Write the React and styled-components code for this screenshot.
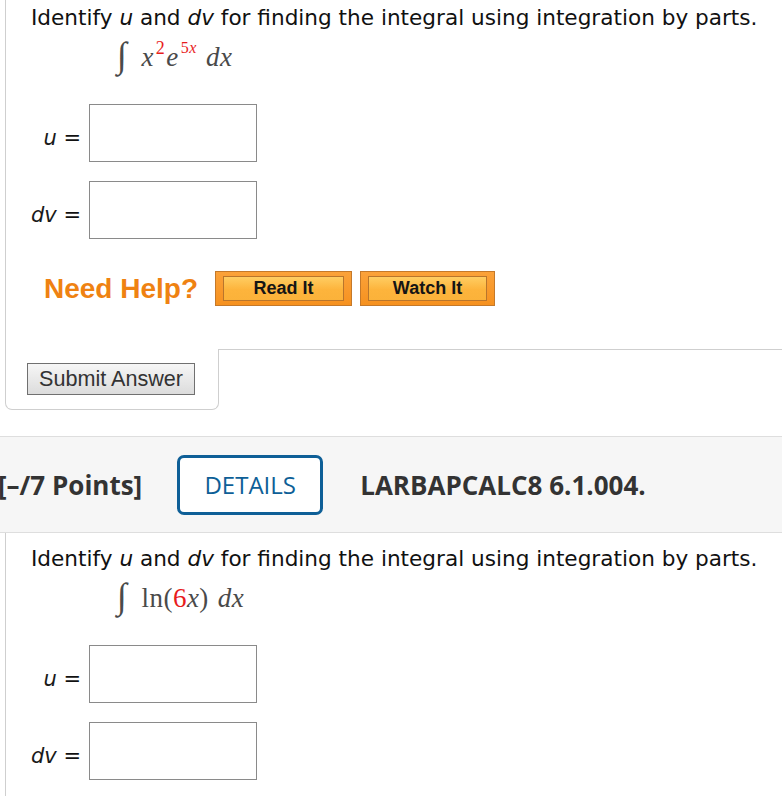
import React from "react";
import styled, { createGlobalStyle } from "styled-components";

const Global = createGlobalStyle`
  html, body { margin: 0; padding: 0; background: #fff; }
  body { width: 782px; overflow: hidden; }
`;

const Page = styled.div`
  width: 782px;
  display: flex;
  flex-direction: column;
`;

const Card = styled.section`
  margin-left: 5px;
  border-left: 1px solid #cfcfcf;
  padding: ${(p) => p.$top}px 0 ${(p) => p.$bottom}px 25px;
  display: flex;
  flex-direction: column;
`;

const Prompt = styled.p`
  margin: 0;
  font-family: "DejaVu Sans", Verdana, sans-serif;
  font-size: 21.6px;
  line-height: 26px;
  color: #111;
  white-space: nowrap;
  em { font-style: italic; }
`;

const MathLine = styled.div`
  margin: 6px 0 0 86px;
  height: 40px;
  display: flex;
  align-items: center;
  font-family: "Liberation Serif", "DejaVu Serif", serif;
  font-size: 27px;
  letter-spacing: 0.5px;
  color: #4a4a4a;
  white-space: nowrap;
`;

const Integral = styled.span`
  font-size: 36px;
  font-style: italic;
  margin-right: 14px;
  display: inline-block;
  transform: translateY(-2px);
`;

const Var = styled.i`
  font-style: italic;
`;

const Red = styled.span`
  color: #e81c1c;
`;

const Sup = styled.sup`
  font-size: ${(p) => p.$size || 16}px;
  vertical-align: 0;
  position: relative;
  top: -9px;
  line-height: 0;
  color: #e81c1c;
  margin-left: 2px;
  margin-right: ${(p) => p.$mr || 1}px;
`;

const Gap = styled.span`
  display: inline-block;
  width: ${(p) => p.$w}px;
`;

const Answers = styled.div`
  margin-top: 27px;
  display: grid;
  grid-template-columns: 50px 168px;
  column-gap: 8px;
  row-gap: 19px;
  align-items: center;
`;

const Label = styled.label`
  font-family: "DejaVu Sans", Verdana, sans-serif;
  font-size: 21px;
  color: #111;
  text-align: right;
  white-space: nowrap;
  padding-top: 10px;
  i { font-style: italic; color: #1a1a1a; }
`;

const AnswerBox = styled.input`
  box-sizing: border-box;
  width: 168px;
  height: 58px;
  margin: 0;
  border: 1px solid #8a8a8a;
  background: #fff;
  outline: none;
`;

const HelpRow = styled.div`
  margin: 32px 0 0 13px;
  height: 35px;
  display: flex;
  align-items: center;
`;

const NeedHelp = styled.span`
  font-family: "Liberation Sans", Arial, sans-serif;
  font-weight: bold;
  font-size: 28px;
  color: #ef8212;
  margin-right: 17px;
  white-space: nowrap;
`;

const HelpOuter = styled.div`
  box-sizing: border-box;
  width: ${(p) => p.$w}px;
  height: 35px;
  margin-right: 8px;
  padding: 4px 7px;
  background: linear-gradient(#fba23a, #f6911f);
  border: 1px solid #c5792a;
  display: flex;
`;

const HelpInner = styled.button`
  flex: 1;
  margin: 0;
  padding: 0;
  border: 1px solid #b9752c;
  background: linear-gradient(#ffcd62, #fdb43c 55%, #fbb23a);
  font-family: "Liberation Sans", Arial, sans-serif;
  font-weight: bold;
  font-size: 18px;
  color: #151515;
  cursor: pointer;
`;

const Footer = styled.div`
  display: flex;
  margin-left: 5px;
`;

const SubmitTab = styled.div`
  box-sizing: border-box;
  width: 214px;
  padding: 14px 0 14px 21px;
  border: 1px solid #cfcfcf;
  border-top: none;
  border-radius: 0 0 7px 7px;
`;

const Filler = styled.div`
  flex: 1;
  border-top: 1px solid #cfcfcf;
`;

const SubmitButton = styled.button`
  box-sizing: border-box;
  width: 168px;
  height: 32px;
  margin: 0;
  padding: 0;
  border: 1px solid #707070;
  background: linear-gradient(#f6f6f6, #dcdcdc);
  font-family: "Liberation Sans", Arial, sans-serif;
  font-size: 21.6px;
  color: #333;
  cursor: pointer;
`;

const Header = styled.div`
  margin-top: 26px;
  box-sizing: border-box;
  height: 97px;
  background: #f6f6f6;
  border-top: 1px solid #dedede;
  border-bottom: 1px solid #dedede;
  display: flex;
  align-items: center;
  font-family: "Open Sans", sans-serif;
  color: #333;
`;

const Points = styled.span`
  margin-left: -2px;
  font-weight: 700;
  font-size: 26px;
  white-space: nowrap;
`;

const DetailsButton = styled.button`
  box-sizing: border-box;
  margin: 0 0 0 35px;
  width: 146px;
  height: 60px;
  border: 3px solid #0e5f97;
  border-radius: 7px;
  background: #fff;
  color: #0e5f97;
  font-family: "Open Sans", sans-serif;
  font-size: 24px;
  cursor: pointer;
`;

const ProblemId = styled.span`
  margin-left: 37px;
  font-weight: 700;
  font-size: 26px;
  white-space: nowrap;
`;

function Question({ top, bottom, math, showHelp }) {
  return (
    <Card $top={top} $bottom={bottom}>
      <Prompt>
        Identify <em>u</em> and <em>dv</em> for finding the integral using integration by parts.
      </Prompt>
      <MathLine>{math}</MathLine>
      <Answers>
        <Label>
          <i>u</i> =
        </Label>
        <AnswerBox aria-label="u" />
        <Label>
          <i>dv</i> =
        </Label>
        <AnswerBox aria-label="dv" />
      </Answers>
      {showHelp && (
        <HelpRow>
          <NeedHelp>Need Help?</NeedHelp>
          <HelpOuter $w={137}>
            <HelpInner>Read It</HelpInner>
          </HelpOuter>
          <HelpOuter $w={135}>
            <HelpInner>Watch It</HelpInner>
          </HelpOuter>
        </HelpRow>
      )}
    </Card>
  );
}

export default function App() {
  return (
    <Page>
      <Global />
      <Question
        top={5}
        bottom={43}
        showHelp
        math={
          <>
            <Integral>∫</Integral>
            <Var>x</Var>
            <Sup $size={18}>2</Sup>
            <Var>e</Var>
            <Sup $size={16} $mr={9}>
              5<i>x</i>
            </Sup>
            <Var>dx</Var>
          </>
        }
      />
      <Footer>
        <SubmitTab>
          <SubmitButton>Submit Answer</SubmitButton>
        </SubmitTab>
        <Filler />
      </Footer>
      <Header>
        <Points>[–/7 Points]</Points>
        <DetailsButton>DETAILS</DetailsButton>
        <ProblemId>LARBAPCALC8 6.1.004.</ProblemId>
      </Header>
      <Question
        top={13}
        bottom={40}
        math={
          <>
            <Integral>∫</Integral>
            <span>ln(</span>
            <Red>6</Red>
            <Var>x</Var>
            <span>)</span>
            <Gap $w={9} />
            <Var>dx</Var>
          </>
        }
      />
    </Page>
  );
}
